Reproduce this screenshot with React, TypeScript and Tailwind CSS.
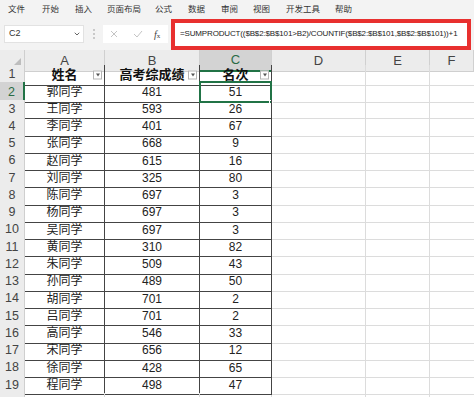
import { ChevronDown } from "lucide-react";

const font = "font-['Liberation_Sans','Noto_Sans_CJK_SC',sans-serif]";

const menus = [
  { label: "文件", w: "w-[34px]" },
  { label: "开始", w: "w-[33px]" },
  { label: "插入", w: "w-[32px]" },
  { label: "页面布局", w: "w-[48px]" },
  { label: "公式", w: "w-[33px]" },
  { label: "数据", w: "w-[33px]" },
  { label: "审阅", w: "w-[32px]" },
  { label: "视图", w: "w-[33px]" },
  { label: "开发工具", w: "w-[49px]" },
  { label: "帮助", w: "w-[30px]" },
];

const rows: [string, number, number][] = [
  ["郭同学", 481, 51],
  ["王同学", 593, 26],
  ["李同学", 401, 67],
  ["张同学", 668, 9],
  ["赵同学", 615, 16],
  ["刘同学", 325, 80],
  ["陈同学", 697, 3],
  ["杨同学", 697, 3],
  ["吴同学", 697, 3],
  ["黄同学", 310, 82],
  ["朱同学", 509, 43],
  ["孙同学", 489, 50],
  ["胡同学", 701, 2],
  ["吕同学", 701, 2],
  ["高同学", 546, 33],
  ["宋同学", 656, 12],
  ["徐同学", 428, 65],
  ["程同学", 498, 47],
];

const gridCols = "grid grid-cols-[25px_80px_95px_72px_94px_64px_1fr]";

function FilterButton() {
  return (
    <span className="absolute right-[2px] top-1/2 -translate-y-1/2 w-[9px] h-[9px] border border-[#b5b5b5] bg-white flex items-center justify-center">
      <span className="block w-0 h-0 border-l-[2px] border-r-[2px] border-t-[3px] border-l-transparent border-r-transparent border-t-[#555]" />
    </span>
  );
}

function HeaderCell({ text }: { text: string }) {
  return (
    <div className="relative h-full flex items-center justify-center text-[13px] font-bold text-[#111] border-r border-b border-[#444]">
      {text}
      <FilterButton />
    </div>
  );
}

function ColumnHeader({ label, active }: { label: string; active?: boolean }) {
  return (
    <div
      className={`h-full flex items-center justify-center text-[13px] border-r border-[#d0d0d0] ${
        active ? "bg-[#d3d3d3] text-[#2a6b45] border-b-2 border-b-[#217346]" : "bg-[#ececec] text-[#444] border-b border-b-[#cfcfcf]"
      }`}
    >
      {label}
    </div>
  );
}

function EmptyCells() {
  return (
    <>
      <div className="border-r border-b border-[#dcdcdc]" />
      <div className="border-r border-b border-[#dcdcdc]" />
      <div className="border-b border-[#dcdcdc]" />
    </>
  );
}

export default function App() {
  return (
    <div className={`w-[474px] h-[397px] overflow-hidden bg-white ${font}`}>
      {/* ribbon tabs */}
      <div className="h-[18px] bg-[#f3f3f3] flex items-center pl-[8px] text-[8.5px] text-[#333]">
        {menus.map((m) => (
          <span key={m.label} className={`${m.w} shrink-0`}>
            {m.label}
          </span>
        ))}
      </div>

      {/* formula bar */}
      <div className="h-[32px] bg-[#f3f3f3] flex items-center">
        <div className="ml-[4px] w-[80px] h-[18px] bg-white border border-[#e2e2e2] flex items-center justify-between pl-[4px] pr-[2px] text-[9px] text-[#333]">
          <span>C2</span>
          <ChevronDown size={8} strokeWidth={3} className="text-[#666]" />
        </div>
        <div className="w-[19px] flex flex-col items-center gap-[2px]">
          <span className="w-[2px] h-[2px] rounded-full bg-[#bbb]" />
          <span className="w-[2px] h-[2px] rounded-full bg-[#bbb]" />
          <span className="w-[2px] h-[2px] rounded-full bg-[#bbb]" />
        </div>
        <div className="w-[65px] h-[18px] bg-white flex items-center">
          <svg width="8" height="8" viewBox="0 0 8 8" className="ml-[7px]">
            <path d="M1 1L7 7M7 1L1 7" stroke="#c4c4c4" strokeWidth="1" />
          </svg>
          <svg width="10" height="8" viewBox="0 0 10 8" className="ml-[15px]">
            <path d="M1 4L4 7L9 1" stroke="#c4c4c4" strokeWidth="1" fill="none" />
          </svg>
          <span className="ml-[11px] text-[10px] italic font-['Liberation_Serif',serif] text-[#444]">
            f<span className="text-[7px] not-italic">x</span>
          </span>
        </div>
        <div className="ml-[3px] w-[300px] h-[31px] border-[4px] border-[#e8302f] bg-white flex items-center pl-[5px] text-[8px] text-[#222] whitespace-nowrap tracking-[-0.15px] overflow-hidden">
          =SUMPRODUCT(($B$2:$B$101&gt;B2)/COUNTIF($B$2:$B$101,$B$2:$B$101))+1
        </div>
      </div>

      {/* column headers */}
      <div className={`${gridCols} h-[15px]`}>
        <div className="bg-[#ececec] border-r border-b border-[#cfcfcf] flex items-end justify-end pr-[3px] pb-[2px]">
          <svg width="11" height="11" viewBox="0 0 11 11">
            <path d="M11 0L11 11L0 11Z" fill="#bdbdbd" />
          </svg>
        </div>
        <ColumnHeader label="A" />
        <ColumnHeader label="B" />
        <ColumnHeader label="C" active />
        <ColumnHeader label="D" />
        <ColumnHeader label="E" />
        <ColumnHeader label="F" />
      </div>

      {/* row 1 */}
      <div className={`${gridCols} h-[17.25px]`}>
        <div className="bg-[#ececec] border-r border-b border-[#cfcfcf] flex items-center justify-center text-[12.5px] text-[#444]">1</div>
        <HeaderCell text="姓名" />
        <HeaderCell text="高考综成绩" />
        <HeaderCell text="名次" />
        <EmptyCells />
      </div>

      {rows.map(([name, score, rank], i) => {
        const n = i + 2;
        const sel = n === 2;
        return (
          <div key={n} className={`${gridCols} h-[17.25px]`}>
            <div
              className={`flex items-center justify-center text-[12.5px] border-b border-[#cfcfcf] ${
                sel ? "bg-[#d3d3d3] text-[#2a6b45] border-r-2 border-r-[#217346]" : "bg-[#ececec] text-[#444] border-r border-r-[#cfcfcf]"
              }`}
            >
              {n}
            </div>
            <div className="flex items-center justify-center text-[12px] text-[#222] border-r border-b border-[#444]">{name}</div>
            <div className="flex items-center justify-center text-[12px] text-[#222] border-r border-b border-[#444]">{score}</div>
            <div
              className={`relative flex items-center justify-center text-[12px] text-[#222] ${
                sel ? "border-2 border-[#217346] -ml-px -mt-px" : "border-r border-b border-[#444]"
              }`}
            >
              {rank}
              {sel && <span className="absolute -right-[3px] -bottom-[3px] w-[4px] h-[4px] bg-[#217346] border border-white" />}
            </div>
            <EmptyCells />
          </div>
        );
      })}

      {/* partial row 20 */}
      <div className={`${gridCols} h-[17px]`}>
        <div className="bg-[#ececec] border-r border-[#cfcfcf]" />
        <div className="border-r border-[#dcdcdc]" />
        <div className="border-r border-[#dcdcdc]" />
        <div className="border-r border-[#dcdcdc]" />
        <div className="border-r border-[#dcdcdc]" />
        <div className="border-r border-[#dcdcdc]" />
        <div />
      </div>
    </div>
  );
}
